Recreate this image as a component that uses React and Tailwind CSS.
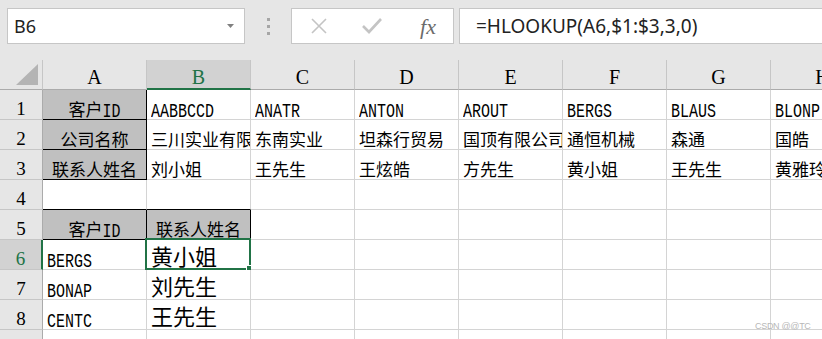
import React from "react";

const COLS = ["A", "B", "C", "D", "E", "F", "G", "H"];

const rows = [
  ["客户ID", "AABBCCD", "ANATR", "ANTON", "AROUT", "BERGS", "BLAUS", "BLONP"],
  ["公司名称", "三川实业有限公司", "东南实业", "坦森行贸易", "国顶有限公司", "通恒机械", "森通", "国皓"],
  ["联系人姓名", "刘小姐", "王先生", "王炫皓", "方先生", "黄小姐", "王先生", "黄雅玲"],
  [],
  ["客户ID", "联系人姓名"],
  ["BERGS", "黄小姐"],
  ["BONAP", "刘先生"],
  ["CENTC", "王先生"],
  [],
];

// latin runs get a narrow mono face, stretched up to the tall SimSun look
const Mixed = ({ text }) =>
  text
    .split(/([A-Za-z0-9]+)/)
    .filter(Boolean)
    .map((part, i) =>
      /^[A-Za-z0-9]+$/.test(part) ? (
        <span
          key={i}
          className="inline-block origin-bottom scale-y-[1.3] font-['Liberation_Mono',monospace] text-[15px] leading-[0]"
        >
          {part}
        </span>
      ) : (
        <span key={i}>{part}</span>
      ),
    );

const cellClass = (r, c) => {
  const label = (c === 0 && r <= 2) || (r === 4 && c <= 1);
  const classes = ["relative h-full w-[104px] shrink-0 border-r border-b"];

  classes.push(label ? "bg-[#c0c0c0]" : "bg-white");

  const blackRight = (c === 0 && r <= 2) || (r === 4 && c <= 1);
  const blackBottom = (c === 0 && r <= 2) || (r === 3 && c <= 1) || (r === 4 && c === 0);

  classes.push(blackRight ? "border-r-black" : "border-r-[#d4d4d4]");
  if (r === 4 && c === 1) classes.push("border-b-[#217346]");
  else classes.push(blackBottom ? "border-b-black" : "border-b-[#d4d4d4]");

  return classes.join(" ");
};

const Cell = ({ r, c, text }) => {
  const centered = (c === 0 && r <= 2) || r === 4;
  const big = c === 1 && r >= 5;
  const active = r === 5 && c === 1;

  return (
    <div className={cellClass(r, c)}>
      {text && (
        <div
          className={`flex h-full items-end overflow-hidden whitespace-nowrap font-['Noto_Sans_CJK_SC',sans-serif] leading-none text-black ${
            centered ? "justify-center" : "pl-[4px]"
          } ${big ? "pb-[3px] text-[22px]" : "pb-[2px] text-[17px]"}`}
        >
          <div>
            <Mixed text={text} />
          </div>
        </div>
      )}
      {active && (
        <div className="absolute -top-[2px] -left-[2px] -right-[1px] -bottom-[1px] border-2 border-[#217346]">
          <div className="absolute -right-[4px] -bottom-[4px] h-[7px] w-[7px] border border-white bg-[#217346]" />
        </div>
      )}
    </div>
  );
};

const FormulaBar = () => (
  <div className="flex h-[60px] items-start bg-[#e6e6e6] pt-[8px] pl-[7px]">
    <div className="flex h-[36px] w-[238px] shrink-0 items-center justify-between border border-[#c6c6c6] bg-white pl-[6px] pr-[10px]">
      <span className="font-['Noto_Sans',sans-serif] text-[18px] text-[#222]">B6</span>
      <svg width="7" height="4" viewBox="0 0 7 4">
        <path d="M0 0h7L3.5 4z" fill="#808080" />
      </svg>
    </div>

    <div className="flex h-[36px] w-[46px] shrink-0 flex-col items-center justify-center gap-[4px]">
      <div className="h-[3px] w-[3px] bg-[#a6a6a6]" />
      <div className="h-[3px] w-[3px] bg-[#a6a6a6]" />
      <div className="h-[3px] w-[3px] bg-[#a6a6a6]" />
    </div>

    <div className="flex h-[36px] w-[163px] shrink-0 items-center border border-[#c6c6c6] bg-white">
      <div className="flex w-[36px] justify-end">
        <svg width="18" height="16" viewBox="0 0 18 16">
          <path d="M2 1l14 14M16 1L2 15" stroke="#c4c4c4" strokeWidth="1.6" fill="none" />
        </svg>
      </div>
      <div className="flex w-[54px] justify-end">
        <svg width="20" height="16" viewBox="0 0 20 16">
          <path d="M1 8l6 6L19 1" stroke="#c4c4c4" strokeWidth="2.6" fill="none" />
        </svg>
      </div>
      <div className="flex w-[54px] justify-end font-['Liberation_Serif',serif] text-[22px] italic text-[#6b6b6b]">
        fx
      </div>
    </div>

    <div className="ml-[5px] flex h-[36px] flex-1 items-center border border-r-0 border-[#c6c6c6] bg-white pl-[16px]">
      <span className="font-['Noto_Sans',sans-serif] text-[19px] text-[#222]">=HLOOKUP(A6,$1:$3,3,0)</span>
    </div>
  </div>
);

const ColumnHeaders = () => (
  <div className="flex h-[30px]">
    <div className="flex h-full w-[43px] shrink-0 items-end justify-end border-r border-b border-r-[#c6c6c6] border-b-[#ababab] bg-[#e6e6e6] pr-[4px] pb-[4px]">
      <svg width="22" height="21" viewBox="0 0 22 21">
        <path d="M22 0V21H0z" fill="#b4b4b4" />
      </svg>
    </div>
    {COLS.map((col) => {
      const sel = col === "B";
      return (
        <div
          key={col}
          className={`flex h-full w-[104px] shrink-0 items-end justify-center border-r border-r-[#c6c6c6] font-['Liberation_Serif',serif] text-[20px] leading-none ${
            sel
              ? "border-b-2 border-b-[#217346] bg-[#d2d2d2] pb-[1px] text-[#217346]"
              : "border-b border-b-[#ababab] bg-[#e6e6e6] pb-[2px] text-black"
          }`}
        >
          {col}
        </div>
      );
    })}
  </div>
);

export default function App() {
  return (
    <div className="relative h-[339px] w-[822px] overflow-hidden bg-white">
      <FormulaBar />
      <ColumnHeaders />

      {rows.map((row, r) => {
        const sel = r === 5;
        return (
          <div key={r} className="flex h-[30px]">
            <div
              className={`flex h-full w-[43px] shrink-0 items-end justify-center border-b border-b-[#c6c6c6] pb-[1px] font-['Liberation_Serif',serif] text-[19px] leading-none ${
                sel
                  ? "border-r-2 border-r-[#217346] bg-[#d2d2d2] text-[#217346]"
                  : "border-r border-r-[#ababab] bg-[#e6e6e6] text-black"
              }`}
            >
              {r + 1}
            </div>
            {COLS.map((_, c) => (
              <Cell key={c} r={r} c={c} text={row[c]} />
            ))}
          </div>
        );
      })}

      <div className="absolute left-[755px] top-[320px] whitespace-nowrap font-['Liberation_Sans',sans-serif] text-[9px] tracking-[-0.3px] text-[#b8b8b8]">
        CSDN @@TC
      </div>
    </div>
  );
}
